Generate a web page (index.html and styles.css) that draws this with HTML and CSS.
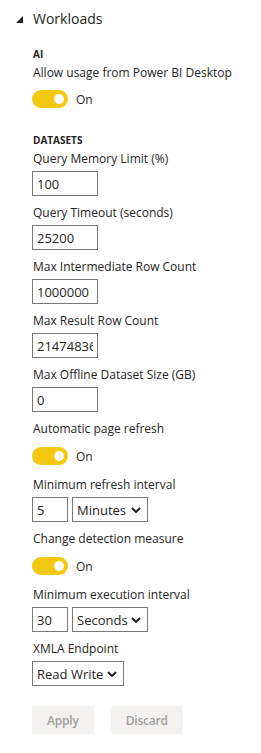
FILE: index.html
```html
<!DOCTYPE html>
<html lang="en">
<head>
  <meta charset="UTF-8" />
  <meta name="viewport" content="width=device-width, initial-scale=1.0" />
  <title>Capacity settings | Workloads</title>
  <link rel="stylesheet" href="styles.css">
</head>
<body>
  <div class="panel">
    <!-- Header -->
    <div class="panel-head">
      <svg class="caret" width="7" height="7" viewBox="0 0 7 7"><polygon points="7,0 7,7 0,7" fill="#252423"/></svg>
      <span>Workloads</span>
    </div>

    <!-- AI -->
    <section class="group">
      <h3>AI</h3>
      <div class="field">
        <label>Allow usage from Power BI Desktop</label>
        <div class="toggle-row"><span class="toggle on"></span><span>On</span></div>
      </div>
    </section>

    <!-- Datasets -->
    <section class="group">
      <h3>DATASETS</h3>
      <div class="field">
        <label for="qml">Query Memory Limit (%)</label>
        <input type="text" id="qml" value="100" />
      </div>
      <div class="field">
        <label for="qto">Query Timeout (seconds)</label>
        <input type="text" id="qto" value="25200" />
      </div>
      <div class="field">
        <label for="mirc">Max Intermediate Row Count</label>
        <input type="text" id="mirc" value="1000000" />
      </div>
      <div class="field">
        <label for="mrrc">Max Result Row Count</label>
        <input type="text" id="mrrc" value="2147483647" />
      </div>
      <div class="field">
        <label for="mods">Max Offline Dataset Size (GB)</label>
        <input type="text" id="mods" value="0" />
      </div>
      <div class="field">
        <label>Automatic page refresh</label>
        <div class="toggle-row"><span class="toggle on"></span><span>On</span></div>
      </div>
      <div class="field">
        <label for="mri">Minimum refresh interval</label>
        <div class="inline">
          <input type="text" id="mri" class="short" value="5" />
          <div class="select"><span>Minutes</span><svg width="10" height="6" viewBox="0 0 10 6"><path d="M1 1l4 4 4-4" fill="none" stroke="#252423" stroke-width="2"/></svg></div>
        </div>
      </div>
      <div class="field">
        <label>Change detection measure</label>
        <div class="toggle-row"><span class="toggle on"></span><span>On</span></div>
      </div>
      <div class="field">
        <label for="mei">Minimum execution interval</label>
        <div class="inline">
          <input type="text" id="mei" class="short" value="30" />
          <div class="select"><span>Seconds</span><svg width="10" height="6" viewBox="0 0 10 6"><path d="M1 1l4 4 4-4" fill="none" stroke="#252423" stroke-width="2"/></svg></div>
        </div>
      </div>
      <div class="field">
        <label>XMLA Endpoint</label>
        <div class="select wide"><span>Read Write</span><svg width="10" height="6" viewBox="0 0 10 6"><path d="M1 1l4 4 4-4" fill="none" stroke="#252423" stroke-width="2"/></svg></div>
      </div>
    </section>

    <!-- Actions -->
    <div class="actions">
      <button disabled>Apply</button>
      <button disabled>Discard</button>
    </div>
  </div>
</body>
</html>
```

FILE: styles.css
```css
/* ---------- Base ---------- */
*, *::before, *::after { box-sizing: border-box; margin: 0; padding: 0; }
body {
  font-family: "Open Sans", "Noto Sans", sans-serif;
  color: #252423;
  background: #fff;
  font-size: 12px;
}
.panel { padding: 9px 0 0 32px; display: flex; flex-direction: column; align-items: flex-start; }

/* ---------- Header ---------- */
.panel-head {
  display: flex; align-items: center;
  margin-left: -16px;
  font-size: 14px; line-height: 20px;
  margin-bottom: 18px;
}
.caret { margin: 0 10px 0 0; }

/* ---------- Groups ---------- */
.group { display: flex; flex-direction: column; align-items: flex-start; }
.group + .group { margin-top: 13px; }
h3 { font-size: 10px; font-weight: 700; line-height: 14px; margin-bottom: 4px; padding-left: 1px; }
.field { margin-bottom: 9px; }
label { display: block; line-height: 16px; margin-bottom: 4px; padding-left: 1px; }

/* ---------- Inputs ---------- */
input, .select {
  height: 25px;
  border: 1px solid #7a7876;
  background: #fff;
  font-family: inherit; font-size: 13px; color: #252423;
}
input { width: 66px; padding: 0 4px; display: block; }
input.short { width: 36px; }
.inline { display: flex; gap: 4px; }
.select {
  width: 76px;
  display: flex; align-items: center; justify-content: space-between;
  padding: 0 6px 0 4px;
}
.select.wide { width: 92px; }

/* ---------- Toggle ---------- */
.toggle-row { display: flex; align-items: center; gap: 8px; padding: 5px 0 3px; }
.group + .group .toggle-row { padding: 6px 0 3px; }
.toggle {
  width: 36px; height: 18px; border-radius: 9px;
  background: #f2c811;
  display: flex; align-items: center; justify-content: flex-end;
  padding-right: 4px;
}
.toggle::after { content: ""; width: 10px; height: 10px; border-radius: 50%; background: #fff; }

/* ---------- Buttons ---------- */
.actions { display: flex; gap: 17px; margin-top: 11px; }
button {
  height: 28px; padding: 0 15px;
  border: none; border-radius: 2px;
  background: #f3f2f1; color: #a19f9d;
  font-family: inherit; font-size: 12px; font-weight: 600; letter-spacing: -0.2px;
}
```
